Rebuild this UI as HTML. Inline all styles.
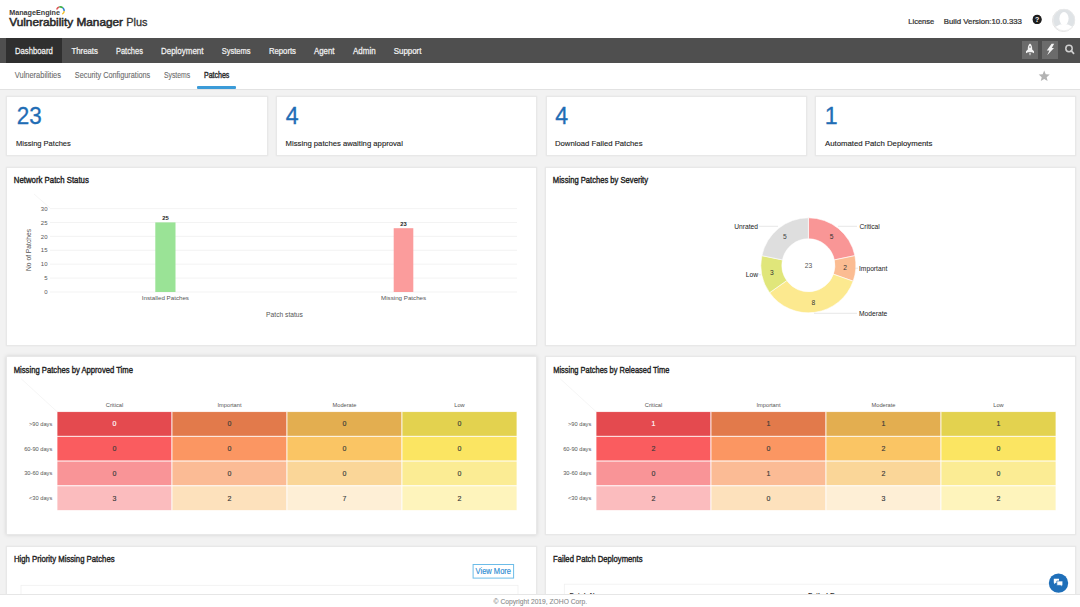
<!DOCTYPE html>
<html><head><meta charset="utf-8">
<style>
*{margin:0;padding:0;box-sizing:border-box}
html,body{width:1080px;height:607px;overflow:hidden}
body{background:#f2f2f2;font-family:"Liberation Sans",sans-serif;position:relative}
.b{position:absolute}
.card{position:absolute;background:#fff;border:1px solid #e8e8e8;box-shadow:0 0 1.5px rgba(0,0,0,0.07)}
</style></head><body>
<div class="b" style="left:0;top:0;width:1080px;height:38px;background:#fff"></div>
<div class="b" style="left:0;top:37.5px;width:1080px;height:25px;background:#4f4f4f"></div>
<div class="b" style="left:6px;top:37.5px;width:56px;height:25px;background:#2f2f2f"></div>
<div class="b" style="left:1022px;top:40.5px;width:16px;height:18px;background:#6b6b6b"></div>
<div class="b" style="left:1042px;top:40.5px;width:16px;height:18px;background:#6b6b6b"></div>
<div class="b" style="left:0;top:62.5px;width:1080px;height:27.5px;background:#fff;border-bottom:1px solid #e2e2e2"></div>
<div class="b" style="left:197px;top:86px;width:39px;height:3px;background:#3b9bd8;border-radius:1px"></div>
<div class="card" style="left:6px;top:96.3px;width:261.8px;height:59.8px"></div>
<div class="card" style="left:275.8px;top:96.3px;width:261.2px;height:59.8px"></div>
<div class="card" style="left:545.5px;top:96.3px;width:261.5px;height:59.8px"></div>
<div class="card" style="left:815.3px;top:96.3px;width:261.2px;height:59.8px"></div>
<div class="card" style="left:6px;top:166.7px;width:531px;height:179.3px"></div>
<div class="card" style="left:545.2px;top:166.7px;width:531.3px;height:179.3px"></div>
<div class="card" style="left:6px;top:355.8px;width:531px;height:179.5px;box-shadow:0 0 4px rgba(0,0,0,0.13)"></div>
<div class="card" style="left:545.2px;top:355.8px;width:531.3px;height:179.5px"></div>
<div class="card" style="left:6px;top:545.7px;width:531px;height:70px"></div>
<div class="card" style="left:545.2px;top:545.7px;width:531.3px;height:70px"></div>
<div class="b" style="left:1032.7px;top:15.4px;width:8.6px;height:8.6px;border-radius:50%;background:#222"></div>
<div class="b" style="left:1052px;top:8.5px;width:23px;height:23px;border-radius:50%;background:#f7f7f7;border:1px solid #e4e4e4"></div>
<svg style="position:absolute;left:0;top:0" width="1080" height="607" viewBox="0 0 1080 607" font-family="Liberation Sans, sans-serif"><text transform="translate(9.20,15.00) scale(1.016,1)" font-size="7.1" fill="#3c3c3c" font-weight="bold">ManageEngine</text><text transform="translate(9.20,25.70) scale(1.116,1)" font-size="10.6" fill="#2a2a2a" stroke="#2a2a2a" stroke-width="0.5">Vulnerability Manager</text><text transform="translate(126.20,25.70) scale(1.028,1)" font-size="10.6" fill="#333" stroke="#333" stroke-width="0.3">Plus</text><text transform="translate(908.30,23.80) scale(0.951,1)" font-size="7.9" fill="#333" stroke="#333" stroke-width="0.25">License</text><text transform="translate(943.70,23.80) scale(0.990,1)" font-size="7.9" fill="#333" stroke="#333" stroke-width="0.25">Build Version:10.0.333</text><text transform="translate(14.90,53.70) scale(0.842,1)" font-size="9.2" fill="#f2f2f2" stroke="#f2f2f2" stroke-width="0.25">Dashboard</text><text transform="translate(71.50,53.70) scale(0.850,1)" font-size="9.2" fill="#f2f2f2" stroke="#f2f2f2" stroke-width="0.25">Threats</text><text transform="translate(115.90,53.70) scale(0.815,1)" font-size="9.2" fill="#f2f2f2" stroke="#f2f2f2" stroke-width="0.25">Patches</text><text transform="translate(161.00,53.70) scale(0.866,1)" font-size="9.2" fill="#f2f2f2" stroke="#f2f2f2" stroke-width="0.25">Deployment</text><text transform="translate(221.70,53.70) scale(0.814,1)" font-size="9.2" fill="#f2f2f2" stroke="#f2f2f2" stroke-width="0.25">Systems</text><text transform="translate(268.90,53.70) scale(0.841,1)" font-size="9.2" fill="#f2f2f2" stroke="#f2f2f2" stroke-width="0.25">Reports</text><text transform="translate(314.00,53.70) scale(0.857,1)" font-size="9.2" fill="#f2f2f2" stroke="#f2f2f2" stroke-width="0.25">Agent</text><text transform="translate(353.00,53.70) scale(0.870,1)" font-size="9.2" fill="#f2f2f2" stroke="#f2f2f2" stroke-width="0.25">Admin</text><text transform="translate(393.70,53.70) scale(0.863,1)" font-size="9.2" fill="#f2f2f2" stroke="#f2f2f2" stroke-width="0.25">Support</text><text transform="translate(14.80,77.90) scale(0.889,1)" font-size="8.4" fill="#6c6c6c" stroke="#6c6c6c" stroke-width="0.1">Vulnerabilities</text><text transform="translate(74.80,77.90) scale(0.871,1)" font-size="8.4" fill="#6c6c6c" stroke="#6c6c6c" stroke-width="0.1">Security Configurations</text><text transform="translate(163.90,77.90) scale(0.820,1)" font-size="8.4" fill="#6c6c6c" stroke="#6c6c6c" stroke-width="0.1">Systems</text><text transform="translate(204.00,77.90) scale(0.837,1)" font-size="8.4" fill="#2a2a2a" stroke="#2a2a2a" stroke-width="0.4">Patches</text><text transform="translate(16.70,123.60) scale(0.977,1)" font-size="23" fill="#1f6db5" stroke="#1f6db5" stroke-width="0.3">23</text><text transform="translate(16.10,145.80) scale(0.939,1)" font-size="8.0" fill="#222" stroke="#222" stroke-width="0.12">Missing Patches</text><text transform="translate(285.70,123.60) scale(1.008,1)" font-size="23" fill="#1f6db5" stroke="#1f6db5" stroke-width="0.3">4</text><text transform="translate(285.60,145.80) scale(0.964,1)" font-size="8.0" fill="#222" stroke="#222" stroke-width="0.12">Missing patches awaiting approval</text><text transform="translate(555.20,123.60) scale(1.008,1)" font-size="23" fill="#1f6db5" stroke="#1f6db5" stroke-width="0.3">4</text><text transform="translate(555.00,145.80) scale(0.965,1)" font-size="8.0" fill="#222" stroke="#222" stroke-width="0.12">Download Failed Patches</text><text transform="translate(824.70,123.60) scale(1.008,1)" font-size="23" fill="#1f6db5" stroke="#1f6db5" stroke-width="0.3">1</text><text transform="translate(825.00,145.80) scale(0.975,1)" font-size="8.0" fill="#222" stroke="#222" stroke-width="0.12">Automated Patch Deployments</text><text transform="translate(13.80,183.00) scale(0.840,1)" font-size="9.3" fill="#1e1e1e" stroke="#1e1e1e" stroke-width="0.4">Network Patch Status</text><text transform="translate(552.80,182.80) scale(0.819,1)" font-size="9.3" fill="#1e1e1e" stroke="#1e1e1e" stroke-width="0.4">Missing Patches by Severity</text><text transform="translate(13.70,373.00) scale(0.825,1)" font-size="9.3" fill="#1e1e1e" stroke="#1e1e1e" stroke-width="0.4">Missing Patches by Approved Time</text><text transform="translate(553.20,372.80) scale(0.804,1)" font-size="9.3" fill="#1e1e1e" stroke="#1e1e1e" stroke-width="0.4">Missing Patches by Released Time</text><text transform="translate(13.90,561.70) scale(0.834,1)" font-size="9.3" fill="#1e1e1e" stroke="#1e1e1e" stroke-width="0.4">High Priority Missing Patches</text><text transform="translate(553.00,561.70) scale(0.827,1)" font-size="9.3" fill="#1e1e1e" stroke="#1e1e1e" stroke-width="0.4">Failed Patch Deployments</text><line x1="50" y1="208.6" x2="517" y2="208.6" stroke="#f0f0f0" stroke-width="0.8"/><text x="47.50" y="210.70" font-size="6" text-anchor="end" fill="#555">30</text><line x1="50" y1="222.5" x2="517" y2="222.5" stroke="#f0f0f0" stroke-width="0.8"/><text x="47.50" y="224.60" font-size="6" text-anchor="end" fill="#555">25</text><line x1="50" y1="236.4" x2="517" y2="236.4" stroke="#f0f0f0" stroke-width="0.8"/><text x="47.50" y="238.50" font-size="6" text-anchor="end" fill="#555">20</text><line x1="50" y1="250.3" x2="517" y2="250.3" stroke="#f0f0f0" stroke-width="0.8"/><text x="47.50" y="252.40" font-size="6" text-anchor="end" fill="#555">15</text><line x1="50" y1="264.2" x2="517" y2="264.2" stroke="#f0f0f0" stroke-width="0.8"/><text x="47.50" y="266.30" font-size="6" text-anchor="end" fill="#555">10</text><line x1="50" y1="278.1" x2="517" y2="278.1" stroke="#f0f0f0" stroke-width="0.8"/><text x="47.50" y="280.20" font-size="6" text-anchor="end" fill="#555">5</text><line x1="50" y1="292" x2="517" y2="292" stroke="#f0f0f0" stroke-width="0.8"/><text x="47.50" y="294.10" font-size="6" text-anchor="end" fill="#555">0</text><line x1="34" y1="194" x2="50" y2="208" stroke="#eee" stroke-width="0.6"/><rect x="155.3" y="222.4" width="20.2" height="69.6" fill="#9ae396"/><rect x="393.7" y="228.2" width="19.6" height="63.8" fill="#fb9c9c"/><text x="165.40" y="220.30" font-size="5.8" text-anchor="middle" fill="#222" font-weight="bold">25</text><text x="403.40" y="225.80" font-size="5.8" text-anchor="middle" fill="#222" font-weight="bold">23</text><text x="165.40" y="300.40" font-size="6.2" text-anchor="middle" fill="#555">Installed Patches</text><text x="403.60" y="300.40" font-size="6.2" text-anchor="middle" fill="#555">Missing Patches</text><text x="284.50" y="317.20" font-size="6.7" text-anchor="middle" fill="#555">Patch status</text><text x="0" y="0" font-size="6.7" text-anchor="middle" fill="#555" transform="translate(31,250) rotate(-90)">No of Patches</text><path d="M808.40,217.80 A47.5,47.5 0 0 1 854.91,255.64 L834.35,259.91 A26.5,26.5 0 0 0 808.40,238.80 Z" fill="#f99696" stroke="#fff" stroke-width="0.6"/><path d="M854.91,255.64 A47.5,47.5 0 0 1 853.16,281.21 L833.37,274.17 A26.5,26.5 0 0 0 834.35,259.91 Z" fill="#fbbc92" stroke="#fff" stroke-width="0.6"/><path d="M853.16,281.21 A47.5,47.5 0 0 1 769.59,292.69 L786.75,280.58 A26.5,26.5 0 0 0 833.37,274.17 Z" fill="#fce98f" stroke="#fff" stroke-width="0.6"/><path d="M769.59,292.69 A47.5,47.5 0 0 1 761.89,255.64 L782.45,259.91 A26.5,26.5 0 0 0 786.75,280.58 Z" fill="#e0e67a" stroke="#fff" stroke-width="0.6"/><path d="M761.89,255.64 A47.5,47.5 0 0 1 808.40,217.80 L808.40,238.80 A26.5,26.5 0 0 0 782.45,259.91 Z" fill="#dedede" stroke="#fff" stroke-width="0.6"/><text x="831.70" y="238.80" font-size="6.7" text-anchor="middle" fill="#333">5</text><text x="845.00" y="270.30" font-size="6.7" text-anchor="middle" fill="#333">2</text><text x="813.40" y="304.70" font-size="6.7" text-anchor="middle" fill="#333">8</text><text x="771.80" y="275.00" font-size="6.7" text-anchor="middle" fill="#333">3</text><text x="784.90" y="238.80" font-size="6.7" text-anchor="middle" fill="#444">5</text><text x="808.40" y="267.50" font-size="6.7" text-anchor="middle" fill="#555">23</text><line x1="838" y1="226.3" x2="857" y2="226.3" stroke="#ddd" stroke-width="0.7"/><line x1="855" y1="268.2" x2="858" y2="268.2" stroke="#ddd" stroke-width="0.7"/><line x1="814" y1="313.3" x2="857" y2="313.3" stroke="#ddd" stroke-width="0.7"/><line x1="759" y1="226.3" x2="778" y2="226.3" stroke="#ddd" stroke-width="0.7"/><line x1="758.5" y1="274.8" x2="761" y2="274.8" stroke="#ddd" stroke-width="0.7"/><text x="859.40" y="228.60" font-size="6.7" text-anchor="start" fill="#222">Critical</text><text x="859.00" y="270.50" font-size="6.7" text-anchor="start" fill="#222">Important</text><text x="859.00" y="315.60" font-size="6.7" text-anchor="start" fill="#222">Moderate</text><text x="758.00" y="228.60" font-size="6.7" text-anchor="end" fill="#222">Unrated</text><text x="758.00" y="277.10" font-size="6.7" text-anchor="end" fill="#222">Low</text><text x="114.50" y="406.60" font-size="5.7" text-anchor="middle" fill="#555">Critical</text><text x="229.50" y="406.60" font-size="5.7" text-anchor="middle" fill="#555">Important</text><text x="344.50" y="406.60" font-size="5.7" text-anchor="middle" fill="#555">Moderate</text><text x="459.50" y="406.60" font-size="5.7" text-anchor="middle" fill="#555">Low</text><text x="52.30" y="425.98" font-size="5.7" text-anchor="end" fill="#555">&gt;90 days</text><rect x="57.00" y="411.60" width="115.00" height="24.75" fill="#e44a4f" stroke="#fff" stroke-width="0.9" stroke-opacity="0.85"/><text x="114.50" y="426.48" font-size="7" text-anchor="middle" fill="#fff" stroke="#fff" stroke-width="0.15">0</text><rect x="172.00" y="411.60" width="115.00" height="24.75" fill="#e27a4b" stroke="#fff" stroke-width="0.9" stroke-opacity="0.85"/><text x="229.50" y="426.48" font-size="7" text-anchor="middle" fill="#3a3a3a" stroke="#3a3a3a" stroke-width="0.15">0</text><rect x="287.00" y="411.60" width="115.00" height="24.75" fill="#e3ae50" stroke="#fff" stroke-width="0.9" stroke-opacity="0.85"/><text x="344.50" y="426.48" font-size="7" text-anchor="middle" fill="#3a3a3a" stroke="#3a3a3a" stroke-width="0.15">0</text><rect x="402.00" y="411.60" width="115.00" height="24.75" fill="#e3d24f" stroke="#fff" stroke-width="0.9" stroke-opacity="0.85"/><text x="459.50" y="426.48" font-size="7" text-anchor="middle" fill="#3a3a3a" stroke="#3a3a3a" stroke-width="0.15">0</text><text x="52.30" y="450.73" font-size="5.7" text-anchor="end" fill="#555">60-90 days</text><rect x="57.00" y="436.35" width="115.00" height="24.75" fill="#fa5c5f" stroke="#fff" stroke-width="0.9" stroke-opacity="0.85"/><text x="114.50" y="451.23" font-size="7" text-anchor="middle" fill="#3a3a3a" stroke="#3a3a3a" stroke-width="0.15">0</text><rect x="172.00" y="436.35" width="115.00" height="24.75" fill="#fb9662" stroke="#fff" stroke-width="0.9" stroke-opacity="0.85"/><text x="229.50" y="451.23" font-size="7" text-anchor="middle" fill="#3a3a3a" stroke="#3a3a3a" stroke-width="0.15">0</text><rect x="287.00" y="436.35" width="115.00" height="24.75" fill="#fac564" stroke="#fff" stroke-width="0.9" stroke-opacity="0.85"/><text x="344.50" y="451.23" font-size="7" text-anchor="middle" fill="#3a3a3a" stroke="#3a3a3a" stroke-width="0.15">0</text><rect x="402.00" y="436.35" width="115.00" height="24.75" fill="#fbe562" stroke="#fff" stroke-width="0.9" stroke-opacity="0.85"/><text x="459.50" y="451.23" font-size="7" text-anchor="middle" fill="#3a3a3a" stroke="#3a3a3a" stroke-width="0.15">0</text><text x="52.30" y="475.48" font-size="5.7" text-anchor="end" fill="#555">30-60 days</text><rect x="57.00" y="461.10" width="115.00" height="24.75" fill="#f99497" stroke="#fff" stroke-width="0.9" stroke-opacity="0.85"/><text x="114.50" y="475.98" font-size="7" text-anchor="middle" fill="#3a3a3a" stroke="#3a3a3a" stroke-width="0.15">0</text><rect x="172.00" y="461.10" width="115.00" height="24.75" fill="#fbbb95" stroke="#fff" stroke-width="0.9" stroke-opacity="0.85"/><text x="229.50" y="475.98" font-size="7" text-anchor="middle" fill="#3a3a3a" stroke="#3a3a3a" stroke-width="0.15">0</text><rect x="287.00" y="461.10" width="115.00" height="24.75" fill="#fad698" stroke="#fff" stroke-width="0.9" stroke-opacity="0.85"/><text x="344.50" y="475.98" font-size="7" text-anchor="middle" fill="#3a3a3a" stroke="#3a3a3a" stroke-width="0.15">0</text><rect x="402.00" y="461.10" width="115.00" height="24.75" fill="#fbec94" stroke="#fff" stroke-width="0.9" stroke-opacity="0.85"/><text x="459.50" y="475.98" font-size="7" text-anchor="middle" fill="#3a3a3a" stroke="#3a3a3a" stroke-width="0.15">0</text><text x="52.30" y="500.23" font-size="5.7" text-anchor="end" fill="#555">&lt;30 days</text><rect x="57.00" y="485.85" width="115.00" height="24.75" fill="#fbbcbe" stroke="#fff" stroke-width="0.9" stroke-opacity="0.85"/><text x="114.50" y="500.73" font-size="7" text-anchor="middle" fill="#3a3a3a" stroke="#3a3a3a" stroke-width="0.15">3</text><rect x="172.00" y="485.85" width="115.00" height="24.75" fill="#fde1bc" stroke="#fff" stroke-width="0.9" stroke-opacity="0.85"/><text x="229.50" y="500.73" font-size="7" text-anchor="middle" fill="#3a3a3a" stroke="#3a3a3a" stroke-width="0.15">2</text><rect x="287.00" y="485.85" width="115.00" height="24.75" fill="#feefd6" stroke="#fff" stroke-width="0.9" stroke-opacity="0.85"/><text x="344.50" y="500.73" font-size="7" text-anchor="middle" fill="#3a3a3a" stroke="#3a3a3a" stroke-width="0.15">7</text><rect x="402.00" y="485.85" width="115.00" height="24.75" fill="#fef4bc" stroke="#fff" stroke-width="0.9" stroke-opacity="0.85"/><text x="459.50" y="500.73" font-size="7" text-anchor="middle" fill="#3a3a3a" stroke="#3a3a3a" stroke-width="0.15">2</text><line x1="21" y1="378.6" x2="57" y2="411.6" stroke="#eee" stroke-width="0.6"/><text x="653.50" y="406.60" font-size="5.7" text-anchor="middle" fill="#555">Critical</text><text x="768.50" y="406.60" font-size="5.7" text-anchor="middle" fill="#555">Important</text><text x="883.50" y="406.60" font-size="5.7" text-anchor="middle" fill="#555">Moderate</text><text x="998.50" y="406.60" font-size="5.7" text-anchor="middle" fill="#555">Low</text><text x="591.30" y="425.98" font-size="5.7" text-anchor="end" fill="#555">&gt;90 days</text><rect x="596.00" y="411.60" width="115.00" height="24.75" fill="#e44a4f" stroke="#fff" stroke-width="0.9" stroke-opacity="0.85"/><text x="653.50" y="426.48" font-size="7" text-anchor="middle" fill="#fff" stroke="#fff" stroke-width="0.15">1</text><rect x="711.00" y="411.60" width="115.00" height="24.75" fill="#e27a4b" stroke="#fff" stroke-width="0.9" stroke-opacity="0.85"/><text x="768.50" y="426.48" font-size="7" text-anchor="middle" fill="#3a3a3a" stroke="#3a3a3a" stroke-width="0.15">1</text><rect x="826.00" y="411.60" width="115.00" height="24.75" fill="#e3ae50" stroke="#fff" stroke-width="0.9" stroke-opacity="0.85"/><text x="883.50" y="426.48" font-size="7" text-anchor="middle" fill="#3a3a3a" stroke="#3a3a3a" stroke-width="0.15">1</text><rect x="941.00" y="411.60" width="115.00" height="24.75" fill="#e3d24f" stroke="#fff" stroke-width="0.9" stroke-opacity="0.85"/><text x="998.50" y="426.48" font-size="7" text-anchor="middle" fill="#3a3a3a" stroke="#3a3a3a" stroke-width="0.15">1</text><text x="591.30" y="450.73" font-size="5.7" text-anchor="end" fill="#555">60-90 days</text><rect x="596.00" y="436.35" width="115.00" height="24.75" fill="#fa5c5f" stroke="#fff" stroke-width="0.9" stroke-opacity="0.85"/><text x="653.50" y="451.23" font-size="7" text-anchor="middle" fill="#3a3a3a" stroke="#3a3a3a" stroke-width="0.15">2</text><rect x="711.00" y="436.35" width="115.00" height="24.75" fill="#fb9662" stroke="#fff" stroke-width="0.9" stroke-opacity="0.85"/><text x="768.50" y="451.23" font-size="7" text-anchor="middle" fill="#3a3a3a" stroke="#3a3a3a" stroke-width="0.15">0</text><rect x="826.00" y="436.35" width="115.00" height="24.75" fill="#fac564" stroke="#fff" stroke-width="0.9" stroke-opacity="0.85"/><text x="883.50" y="451.23" font-size="7" text-anchor="middle" fill="#3a3a3a" stroke="#3a3a3a" stroke-width="0.15">2</text><rect x="941.00" y="436.35" width="115.00" height="24.75" fill="#fbe562" stroke="#fff" stroke-width="0.9" stroke-opacity="0.85"/><text x="998.50" y="451.23" font-size="7" text-anchor="middle" fill="#3a3a3a" stroke="#3a3a3a" stroke-width="0.15">0</text><text x="591.30" y="475.48" font-size="5.7" text-anchor="end" fill="#555">30-60 days</text><rect x="596.00" y="461.10" width="115.00" height="24.75" fill="#f99497" stroke="#fff" stroke-width="0.9" stroke-opacity="0.85"/><text x="653.50" y="475.98" font-size="7" text-anchor="middle" fill="#3a3a3a" stroke="#3a3a3a" stroke-width="0.15">0</text><rect x="711.00" y="461.10" width="115.00" height="24.75" fill="#fbbb95" stroke="#fff" stroke-width="0.9" stroke-opacity="0.85"/><text x="768.50" y="475.98" font-size="7" text-anchor="middle" fill="#3a3a3a" stroke="#3a3a3a" stroke-width="0.15">1</text><rect x="826.00" y="461.10" width="115.00" height="24.75" fill="#fad698" stroke="#fff" stroke-width="0.9" stroke-opacity="0.85"/><text x="883.50" y="475.98" font-size="7" text-anchor="middle" fill="#3a3a3a" stroke="#3a3a3a" stroke-width="0.15">2</text><rect x="941.00" y="461.10" width="115.00" height="24.75" fill="#fbec94" stroke="#fff" stroke-width="0.9" stroke-opacity="0.85"/><text x="998.50" y="475.98" font-size="7" text-anchor="middle" fill="#3a3a3a" stroke="#3a3a3a" stroke-width="0.15">0</text><text x="591.30" y="500.23" font-size="5.7" text-anchor="end" fill="#555">&lt;30 days</text><rect x="596.00" y="485.85" width="115.00" height="24.75" fill="#fbbcbe" stroke="#fff" stroke-width="0.9" stroke-opacity="0.85"/><text x="653.50" y="500.73" font-size="7" text-anchor="middle" fill="#3a3a3a" stroke="#3a3a3a" stroke-width="0.15">2</text><rect x="711.00" y="485.85" width="115.00" height="24.75" fill="#fde1bc" stroke="#fff" stroke-width="0.9" stroke-opacity="0.85"/><text x="768.50" y="500.73" font-size="7" text-anchor="middle" fill="#3a3a3a" stroke="#3a3a3a" stroke-width="0.15">0</text><rect x="826.00" y="485.85" width="115.00" height="24.75" fill="#feefd6" stroke="#fff" stroke-width="0.9" stroke-opacity="0.85"/><text x="883.50" y="500.73" font-size="7" text-anchor="middle" fill="#3a3a3a" stroke="#3a3a3a" stroke-width="0.15">3</text><rect x="941.00" y="485.85" width="115.00" height="24.75" fill="#fef4bc" stroke="#fff" stroke-width="0.9" stroke-opacity="0.85"/><text x="998.50" y="500.73" font-size="7" text-anchor="middle" fill="#3a3a3a" stroke="#3a3a3a" stroke-width="0.15">2</text><line x1="560" y1="378.6" x2="596" y2="411.6" stroke="#eee" stroke-width="0.6"/><path d="M56.64,9.47 A3.9,3.9 0 0 1 59.29,7.03" fill="none" stroke="#e05a5a" stroke-width="1.5"/><path d="M59.29,7.03 A3.9,3.9 0 0 1 62.81,7.81" fill="none" stroke="#3fb14a" stroke-width="1.5"/><path d="M62.81,7.81 A3.9,3.9 0 0 1 64.19,11.14" fill="none" stroke="#2f7fd0" stroke-width="1.5"/><path d="M64.19,11.14 A3.9,3.9 0 0 1 62.25,14.18" fill="none" stroke="#f2c12e" stroke-width="1.5"/><circle cx="1037.2" cy="19.4" r="4.6" fill="#1e1e1e"/><text x="1037.2" y="21.9" font-size="7" font-weight="bold" text-anchor="middle" fill="#fff">?</text><defs><clipPath id="av"><circle cx="1064" cy="20" r="11"/></clipPath></defs><circle cx="1064" cy="20" r="11" fill="#dfe3e6"/><g clip-path="url(#av)"><ellipse cx="1064" cy="18.6" rx="4.6" ry="6.6" fill="#fff"/><ellipse cx="1064" cy="31.5" rx="10.5" ry="7.5" fill="#fff"/></g><circle cx="1064" cy="20" r="10.8" fill="none" stroke="#ebebeb" stroke-width="0.8"/><path d="M1030,43.6 C1031.6,44.8 1032.3,47 1032.2,49.5 L1034,51.3 L1034,53.2 L1032,52.2 L1028,52.2 L1026,53.2 L1026,51.3 L1027.8,49.5 C1027.7,47 1028.4,44.8 1030,43.6 Z" fill="#f4f4f4"/><circle cx="1030" cy="46.9" r="0.9" fill="#8a8a8a"/><path d="M1029,53.2 L1031,53.2 L1030,55.8 Z" fill="#e6e6e6"/><path d="M1051.6,43.8 L1054.2,43.8 L1051.8,48.0 L1054.0,48.0 L1047.2,55.2 L1049.4,50.6 L1046.8,50.6 Z" fill="#f4f4f4"/><circle cx="1069" cy="48.5" r="3.2" fill="none" stroke="#cfcfcf" stroke-width="1.5"/><line x1="1071.3" y1="50.9" x2="1073.6" y2="53.3" stroke="#cfcfcf" stroke-width="1.7" stroke-linecap="round"/><polygon points="1044.20,70.60 1045.73,74.30 1049.72,74.61 1046.67,77.20 1047.61,81.09 1044.20,79.00 1040.79,81.09 1041.73,77.20 1038.68,74.61 1042.67,74.30" fill="#b3b3b3"/><rect x="21" y="585.3" width="497" height="20" fill="#fff" stroke="#f0f0f0" stroke-width="0.8"/><rect x="564.3" y="584.2" width="492" height="20" fill="#fff" stroke="#f0f0f0" stroke-width="0.8"/><text transform="translate(569.60,597.90) scale(0.894,1)" font-size="7.5" fill="#333" font-weight="bold">Patch Name</text><text transform="translate(808.00,597.90) scale(0.924,1)" font-size="7.5" fill="#333" font-weight="bold">Failed Reason</text><rect x="473.1" y="564.5" width="40.5" height="13.6" fill="#fff" stroke="#6cbce8" stroke-width="1"/><text transform="translate(475.60,574.30) scale(0.875,1)" font-size="8.6" fill="#2b8bd2" stroke="#2b8bd2" stroke-width="0.15">View More</text></svg>
<div class="b" style="left:0;top:594px;width:1080px;height:13px;background:#fff;border-top:1px solid #e6e6e6"></div>
<svg style="position:absolute;left:0;top:0" width="1080" height="607" viewBox="0 0 1080 607" font-family="Liberation Sans, sans-serif"><g id="chat"><circle cx="1058.5" cy="583.1" r="9.7" fill="#1f6fb9"/><path d="M1053.8,578.8 h5.2 v4 h-3.2 l-1.6,1.4 v-1.4 h-0.4 z" fill="#fff"/><path d="M1056.8,581 h6 v4.4 h-0.9 v1.4 l-1.5,-1.4 h-3.6 z" fill="#fff" stroke="#1f6fb9" stroke-width="0.7"/></g><text transform="translate(493.60,604.40) scale(0.859,1)" font-size="7.8" fill="#8a8a8a" stroke="#8a8a8a" stroke-width="0.1">© Copyright 2019, ZOHO Corp.</text></svg>
</body></html>
